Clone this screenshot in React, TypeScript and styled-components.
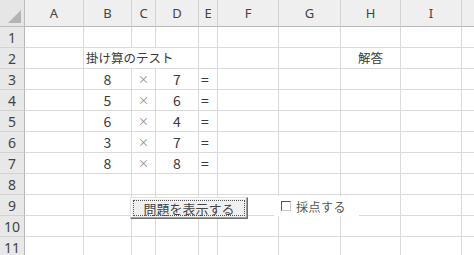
import React from "react";
import styled, { createGlobalStyle } from "styled-components";

const Global = createGlobalStyle`
  html, body { margin: 0; padding: 0; background: #fff; }
  body { font-family: "Noto Sans CJK JP", "Noto Sans", sans-serif; overflow: hidden; }
`;

const Sheet = styled.div`
  position: relative;
  width: 474px;
  height: 255px;
  overflow: hidden;
  background: #fff;
`;

const Grid = styled.div`
  display: grid;
  grid-template-columns: 25px 59px 48px 24px 43px 19px 61px 62px 60px 61px 40px;
  grid-template-rows: 27px repeat(11, 21px);
`;

const Corner = styled.div`
  position: relative;
  background: #e6e6e6;
  border-right: 1px solid #bcbcbc;
  border-bottom: 1px solid #bcbcbc;
  box-sizing: border-box;
  &::after {
    content: "";
    position: absolute;
    right: 3px;
    bottom: 3px;
    width: 0;
    height: 0;
    border-left: 13px solid transparent;
    border-bottom: 13px solid #b4b4b4;
  }
`;

const ColHead = styled.div`
  display: flex;
  align-items: center;
  justify-content: center;
  background: #efefef;
  border-right: 1px solid #d2d2d2;
  border-bottom: 1px solid #b8b8b8;
  box-sizing: border-box;
  font-family: "Noto Sans", sans-serif;
  font-size: 13px;
  color: #444;
  padding-bottom: 1px;
`;

const RowHead = styled.div`
  display: flex;
  align-items: center;
  justify-content: center;
  background: #e8e8e8;
  border-right: 1px solid #b8b8b8;
  border-bottom: 1px solid #d2d2d2;
  box-sizing: border-box;
  font-family: "Noto Sans", sans-serif;
  font-size: 14px;
  color: #444;
`;

const Cell = styled.div<{ $align?: string; $span?: number; $kind?: "num" | "op" | "jp" }>`
  display: flex;
  align-items: center;
  justify-content: ${(p) => p.$align || "flex-start"};
  grid-column: ${(p) => (p.$span ? `span ${p.$span}` : "auto")};
  border-right: 1px solid #dadada;
  border-bottom: 1px solid #dadada;
  box-sizing: border-box;
  padding: 0 2px;
  font-size: ${(p) => (p.$kind === "op" ? "11px" : p.$kind === "jp" ? "12.5px" : "14px")};
  color: ${(p) => (p.$kind === "op" ? "#8a8a8a" : "#3a3a3a")};
  white-space: nowrap;
  overflow: visible;
  line-height: 1;
`;

const Button = styled.div`
  position: absolute;
  left: 130px;
  top: 197px;
  width: 118px;
  height: 22px;
  box-sizing: border-box;
  background: #f0f0f0;
  border: 1px solid #6e6e6e;
  border-top-color: #e3e3e3;
  border-left-color: #e3e3e3;
  box-shadow: inset -1px -1px 0 #a0a0a0, inset 1px 1px 0 #ffffff;
  padding: 2px;
`;

const ButtonFocus = styled.div`
  height: 100%;
  box-sizing: border-box;
  border: 1px dotted #555;
  display: flex;
  align-items: center;
  justify-content: center;
  font-size: 13px;
  color: #444;
`;

const CheckControl = styled.div`
  position: absolute;
  left: 274px;
  top: 196px;
  width: 85px;
  height: 20px;
  background: #fff;
  display: flex;
  align-items: center;
  gap: 5px;
  padding-left: 7px;
  box-sizing: border-box;
`;

const Box = styled.div`
  width: 8px;
  height: 8px;
  border: 1px solid #555;
  border-right-color: #ccc;
  border-bottom-color: #ccc;
  background: #fff;
`;

const CheckLabel = styled.span`
  font-size: 12px;
  color: #555;
  letter-spacing: 0.5px;
`;

const cols = ["A", "B", "C", "D", "E", "F", "G", "H", "I", ""];

const problems: [string, string][] = [
  ["8", "7"],
  ["5", "6"],
  ["6", "4"],
  ["3", "7"],
  ["8", "8"],
];

const Blank: React.FC<{ n: number }> = ({ n }) => (
  <>
    {Array.from({ length: n }).map((_, i) => (
      <Cell key={i} />
    ))}
  </>
);

export default function App() {
  return (
    <Sheet>
      <Global />
      <Grid>
        <Corner />
        {cols.map((c, i) => (
          <ColHead key={i}>{c}</ColHead>
        ))}

        <RowHead>1</RowHead>
        <Blank n={10} />

        <RowHead>2</RowHead>
        <Cell />
        <Cell $span={3} $kind="jp">掛け算のテスト</Cell>
        <Cell />
        <Cell />
        <Cell />
        <Cell $align="center" $kind="jp">解答</Cell>
        <Cell />
        <Cell />

        {problems.map(([a, b], i) => (
          <React.Fragment key={i}>
            <RowHead>{i + 3}</RowHead>
            <Cell />
            <Cell $align="center" $kind="num">{a}</Cell>
            <Cell $align="center" $kind="op">×</Cell>
            <Cell $align="center" $kind="num">{b}</Cell>
            <Cell $kind="num">=</Cell>
            <Blank n={5} />
          </React.Fragment>
        ))}

        {[8, 9, 10, 11].map((r) => (
          <React.Fragment key={r}>
            <RowHead>{r}</RowHead>
            <Blank n={10} />
          </React.Fragment>
        ))}
      </Grid>

      <Button>
        <ButtonFocus>問題を表示する</ButtonFocus>
      </Button>
      <CheckControl>
        <Box />
        <CheckLabel>採点する</CheckLabel>
      </CheckControl>
    </Sheet>
  );
}
